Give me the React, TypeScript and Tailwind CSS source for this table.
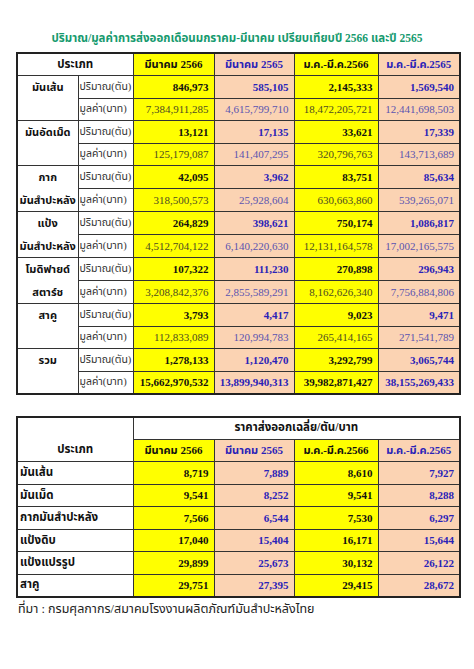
import React from 'react';

const Y = 'bg-[#ffff00]';
const P = 'bg-[#fbd3b3]';
const FONT = { fontFamily: '"Liberation Serif", "Noto Sans Thai", "Noto Serif Thai", serif' };

type G = { l1: string; l2?: string; q: string[]; v: string[]; boldV?: boolean };

const groups: G[] = [
  { l1: 'มันเส้น', q: ['846,973', '585,105', '2,145,333', '1,569,540'], v: ['7,384,911,285', '4,615,799,710', '18,472,205,721', '12,441,698,503'] },
  { l1: 'มันอัดเม็ด', q: ['13,121', '17,135', '33,621', '17,339'], v: ['125,179,087', '141,407,295', '320,796,763', '143,713,689'] },
  { l1: 'กาก', l2: 'มันสำปะหลัง', q: ['42,095', '3,962', '83,751', '85,634'], v: ['318,500,573', '25,928,604', '630,663,860', '539,265,071'] },
  { l1: 'แป้ง', l2: 'มันสำปะหลัง', q: ['264,829', '398,621', '750,174', '1,086,817'], v: ['4,512,704,122', '6,140,220,630', '12,131,164,578', '17,002,165,575'] },
  { l1: 'โมดิฟายด์', l2: 'สตาร์ช', q: ['107,322', '111,230', '270,898', '296,943'], v: ['3,208,842,376', '2,855,589,291', '8,162,626,340', '7,756,884,806'] },
  { l1: 'สาคู', q: ['3,793', '4,417', '9,023', '9,471'], v: ['112,833,089', '120,994,783', '265,414,165', '271,541,789'] },
  { l1: 'รวม', q: ['1,278,133', '1,120,470', '3,292,799', '3,065,744'], v: ['15,662,970,532', '13,899,940,313', '39,982,871,427', '38,155,269,433'], boldV: true },
];

const prices: string[][] = [
  ['มันเส้น', '8,719', '7,889', '8,610', '7,927'],
  ['มันเม็ด', '9,541', '8,252', '9,541', '8,288'],
  ['กากมันสำปะหลัง', '7,566', '6,544', '7,530', '6,297'],
  ['แป้งดิบ', '17,040', '15,404', '16,171', '15,644'],
  ['แป้งแปรรูป', '29,899', '25,673', '30,132', '26,122'],
  ['สาคู', '29,751', '27,395', '29,415', '28,672'],
];

const heads = ['มีนาคม 2566', 'มีนาคม 2565', 'ม.ค.-มี.ค.2566', 'ม.ค.-มี.ค.2565'];
const bgs = [Y, P, Y, P];

const cell = 'border border-[#333] h-[22.5px] p-0';

function numCls(i: number, bold: boolean) {
  const yellow = i % 2 === 0;
  if (bold) return yellow ? 'text-[#111] font-bold' : 'text-[#2a22b8] font-bold';
  return yellow ? 'text-[#4d4d22]' : 'text-[#5a54b0]';
}

export default function App() {
  return (
    <div className="w-[474px] h-[669px] bg-white relative" style={FONT}>
      <div className="pt-[27px] h-[52px] text-center text-[11.5px] font-bold text-[#169a6e] leading-[22px] whitespace-nowrap">
        ปริมาณ/มูลค่าการส่งออกเดือนมกราคม-มีนาคม เปรียบเทียบปี 2566 และปี 2565
      </div>
      <table className="ml-[16px] w-[443px] table-fixed border-collapse border-2 border-[#222] text-[11px]">
        <colgroup>
          <col className="w-[61px]" />
          <col className="w-[55px]" />
          <col className="w-[81px]" />
          <col className="w-[80px]" />
          <col className="w-[84px]" />
          <col className="w-[82px]" />
        </colgroup>
        <tbody>
          <tr>
            <td colSpan={2} className={`${cell} text-center font-bold text-[11.5px] text-[#111]`}>ประเภท</td>
            {heads.map((h, i) => (
              <td key={h} className={`${cell} ${bgs[i]} text-center font-bold text-[11px] ${i % 2 === 0 ? 'text-[#111]' : 'text-[#2a22b8]'}`}>{h}</td>
            ))}
          </tr>
          {groups.map((g) => (
            <React.Fragment key={g.l1}>
              <tr>
                <td rowSpan={2} className={`${cell} align-top text-center font-bold text-[11px] text-[#111] whitespace-nowrap`}>
                  <div className="h-[22.5px] flex items-center justify-center">{g.l1}</div>
                  {g.l2 && <div className="h-[22.5px] flex items-center justify-center">{g.l2}</div>}
                </td>
                <td className={`${cell} text-left pl-[1px] text-[10.5px] text-[#333] whitespace-nowrap`}>ปริมาณ(ตัน)</td>
                {g.q.map((n, i) => (
                  <td key={i} className={`${cell} ${bgs[i]} text-right pr-[5px] ${numCls(i, true)}`}>{n}</td>
                ))}
              </tr>
              <tr>
                <td className={`${cell} text-left pl-[1px] text-[10.5px] text-[#333] whitespace-nowrap`}>มูลค่า(บาท)</td>
                {g.v.map((n, i) => (
                  <td key={i} className={`${cell} ${bgs[i]} text-right pr-[5px] ${numCls(i, !!g.boldV)}`}>{n}</td>
                ))}
              </tr>
            </React.Fragment>
          ))}
        </tbody>
      </table>

      <table className="ml-[16px] mt-[21px] w-[443px] table-fixed border-collapse border-2 border-[#222] text-[11px]">
        <colgroup>
          <col className="w-[116px]" />
          <col className="w-[81px]" />
          <col className="w-[80px]" />
          <col className="w-[84px]" />
          <col className="w-[82px]" />
        </colgroup>
        <tbody>
          <tr>
            <td rowSpan={2} className={`${cell} align-bottom text-center font-bold text-[11.5px] text-[#111] pb-[3px]`}>ประเภท</td>
            <td colSpan={4} className={`${cell} text-center font-bold text-[11.5px] text-[#111]`}>ราคาส่งออกเฉลี่ย/ตัน/บาท</td>
          </tr>
          <tr>
            {heads.map((h, i) => (
              <td key={h} className={`${cell} ${bgs[i]} text-center font-bold text-[11px] ${i % 2 === 0 ? 'text-[#111]' : 'text-[#2a22b8]'}`}>{h}</td>
            ))}
          </tr>
          {prices.map((r) => (
            <tr key={r[0]}>
              <td className={`${cell} text-left pl-[2px] font-bold text-[11.5px] text-[#111]`}>{r[0]}</td>
              {r.slice(1).map((n, i) => (
                <td key={i} className={`${cell} ${bgs[i]} text-right pr-[5px] ${numCls(i, true)}`}>{n}</td>
              ))}
            </tr>
          ))}
        </tbody>
      </table>
      <div className="pl-[18px] pt-[1px] text-[12.5px] text-[#222] leading-[20px]">
        ที่มา : กรมศุลกากร/สมาคมโรงงานผลิตภัณฑ์มันสำปะหลังไทย
      </div>
    </div>
  );
}
